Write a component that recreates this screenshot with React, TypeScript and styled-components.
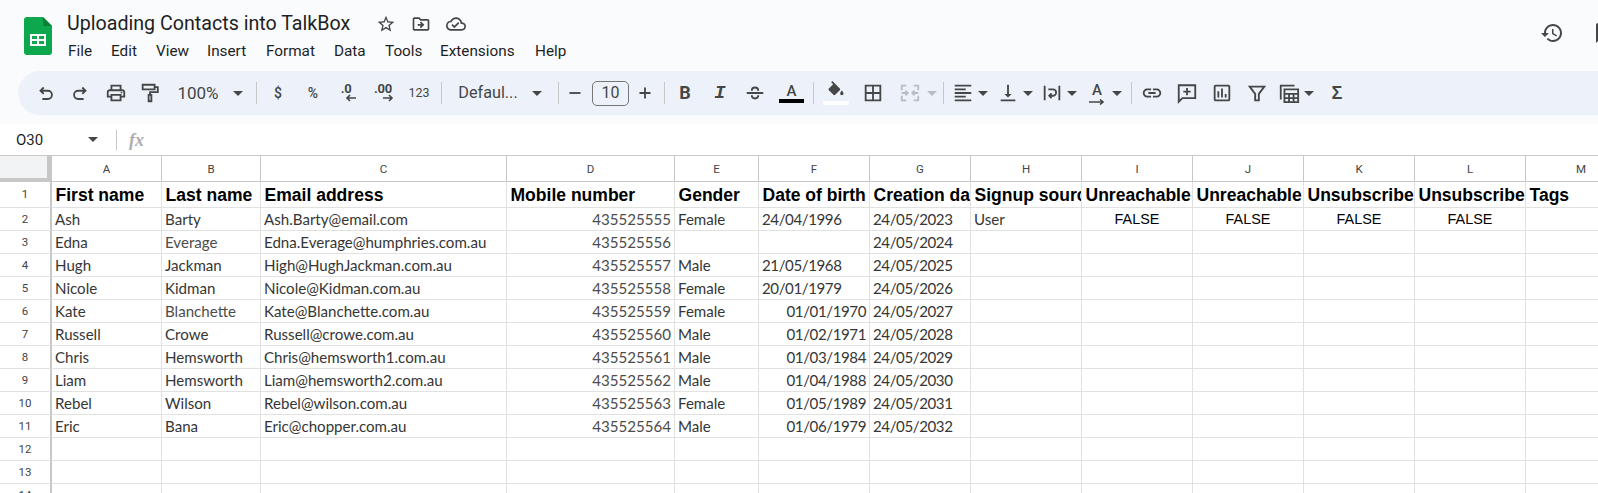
import React from "react";
import styled, { createGlobalStyle } from "styled-components";

const Global = createGlobalStyle`
  html, body { margin: 0; padding: 0; background: #fff; }
  body { width: 1598px; height: 493px; overflow: hidden; font-family: Roboto, "Liberation Sans", sans-serif; }
`;

const Page = styled.div`
  width: 1598px; height: 493px; overflow: hidden; display: flex; flex-direction: column;
`;
const Chrome = styled.div`
  height: 124px; background: #f9fbfd; display: flex; flex-direction: column; flex: none;
`;
const Header = styled.header`
  height: 71px; display: flex; align-items: flex-start; padding-left: 24px; flex: none;
`;
const LogoBox = styled.svg`
  width: 28px; height: 38px; margin-top: 17px; flex: none;
`;
const TitleBlock = styled.div`
  margin-left: 15px; display: flex; flex-direction: column; flex: none;
`;
const TitleRow = styled.div`
  display: flex; align-items: center; height: 24px; margin-top: 12px;
`;
const DocTitle = styled.h1`
  margin: 0; font: 400 19.65px/24px Roboto, sans-serif; color: #1f1f1f; width: 309px;
`;
const TitleIcon = styled.svg`
  width: 20px; height: 20px; fill: #444746; margin-right: 15px; flex: none;
`;
const MenuBar = styled.nav`
  display: flex; margin-top: 5px; height: 20px; align-items: center;
`;
const MenuItem = styled.span<{ $w: number }>`
  width: ${(p) => p.$w}px; font: 400 15.3px/20px Roboto, sans-serif; color: #1f1f1f; padding-left: 1px; box-sizing: border-box;
`;
const HeaderRight = styled.div`
  margin-left: auto; margin-right: -20px; margin-top: 21px; display: flex; gap: 30px;
`;
const HeaderIcon = styled.svg`
  width: 24px; height: 24px; fill: #444746; flex: none;
`;
const Toolbar = styled.div`
  height: 44px; margin-left: 18px; padding-left: 16px; background: #edf2fa; border-radius: 24px 0 0 24px;
  display: flex; align-items: center; flex: none; color: #444746;
`;
const Tool = styled.div<{ $w: number; $ml?: number }>`
  width: ${(p) => p.$w}px; margin-left: ${(p) => p.$ml ?? 0}px; height: 30px; flex: none;
  display: flex; flex-direction: column; align-items: center; justify-content: center; position: relative;
`;
const Glyph = styled.svg<{ $off?: boolean }>`
  width: 22px; height: 22px; flex: none; fill: ${(p) => (p.$off ? "#b9bcc1" : "#444746")};
`;
const StrokeGlyph = styled.svg<{ $off?: boolean }>`
  width: 22px; height: 22px; flex: none; fill: none; stroke: ${(p) => (p.$off ? "#b9bcc1" : "#444746")}; stroke-width: 2;
`;
const Caret = styled.span<{ $off?: boolean }>`
  width: 0; height: 0; border-left: 5px solid transparent; border-right: 5px solid transparent;
  border-top: 5px solid ${(p) => (p.$off ? "#b9bcc1" : "#444746")};
`;
const ToolDivider = styled.div<{ $ml: number }>`
  width: 1px; height: 22px; background: #c7c7c7; margin-left: ${(p) => p.$ml}px; flex: none;
`;
const ToolText = styled.span<{ $size?: number; $weight?: number }>`
  font: ${(p) => p.$weight ?? 400} ${(p) => p.$size ?? 14}px/18px Roboto, sans-serif; color: #444746; white-space: nowrap;
`;
const DecimalText = styled.span`
  font: 700 13px/12px Roboto, sans-serif; color: #444746; letter-spacing: -0.3px; margin-top: -2px;
`;
const DecimalArrow = styled.svg`
  width: 12px; height: 8px; fill: none; stroke: #444746; stroke-width: 1.6; margin: -1px 0 0 10px;
`;
const ItalicI = styled.span`
  font: italic 700 19px/18px "Liberation Mono", monospace; color: #444746;
`;
const BoldB = styled.span`
  font: 700 18px/18px Roboto, sans-serif; color: #444746;
`;
const ColorA = styled.span`
  font: 500 15px/15px Roboto, sans-serif; color: #444746; margin-top: 1px;
`;
const ColorBar = styled.span<{ $c: string }>`
  width: 100%; height: 4px; background: ${(p) => p.$c}; flex: none;
`;
const RotationArrow = styled.svg`
  width: 16px; height: 6px; fill: none; stroke: #444746; stroke-width: 1.6; flex: none; margin-top: 1px;
`;
const SmallGlyph = styled.svg`
  width: 20px; height: 20px; fill: #444746; flex: none;
`;
const SizeBox = styled.div`
  width: 37px; height: 25px; margin-left: 11px; border: 1px solid #747775; border-radius: 5px; box-sizing: border-box;
  display: flex; align-items: center; justify-content: center; flex: none;
  font: 400 16px/20px Roboto, sans-serif; color: #444746;
`;
const Sigma = styled.span`
  font: 700 18px/20px "Liberation Sans", sans-serif; color: #444746;
`;
const FormulaBar = styled.div`
  height: 31px; flex: none; display: flex; align-items: center; background: #fff; padding-left: 16px; box-sizing: border-box;
`;
const NameBox = styled.div`
  width: 88px; display: flex; align-items: center; justify-content: space-between; padding-right: 6px; box-sizing: border-box;
  font: 400 15px/18px Roboto, sans-serif; color: #1f1f1f;
`;
const FormulaDivider = styled.div`
  width: 1px; height: 20px; background: #c7c7c7; margin-left: 12px;
`;
const Fx = styled.span`
  font: italic 700 18px/18px "Liberation Serif", serif; color: #adadad; margin-left: 12px;
`;
const Sheet = styled.div`
  display: grid; grid-template-columns: 52px 110px 99px 246px 168px 84px 111px 101px 111px 111px 111px 111px 111px 111px;
  grid-auto-rows: 23px; grid-template-rows: 26px 26px; border-top: 1px solid #c7c7c7; flex: none; width: max-content;
`;
const Corner = styled.div`
  background: #f1f3f4; border-right: 5px solid #c7c7c7; border-bottom: 4px solid #c7c7c7; box-sizing: border-box;
`;
const ColHead = styled.div`
  display: flex; align-items: center; justify-content: center; box-sizing: border-box;
  border-right: 1px solid #c7c7c7; border-bottom: 1px solid #c7c7c7; background: #fff;
  font: 400 11.5px/14px Roboto, sans-serif; color: #444;
`;
const RowHead = styled.div`
  display: flex; align-items: center; justify-content: center; box-sizing: border-box;
  border-right: 2px solid #c7c7c7; border-bottom: 1px solid #e1e1e1; background: #fff;
  font: 400 11.5px/14px Roboto, sans-serif; color: #444; padding-bottom: 1px;
`;
const Cell = styled.div<{ $align?: string; $muted?: boolean }>`
  box-sizing: border-box; border-right: 1px solid #e1e1e1; border-bottom: 1px solid #e1e1e1;
  overflow: hidden; white-space: nowrap; padding: 0 3px; text-align: ${(p) => p.$align ?? "left"};
  font: 400 15.1px/23px Lato, sans-serif; color: ${(p) => (p.$muted ? "#4c4c4c" : "#363636")};
`;
const DateCell = styled(Cell)`
  letter-spacing: -0.42px;
`;
const HeadCell = styled(Cell)`
  font: 700 17.55px/26px "Liberation Sans", Arial, sans-serif; color: #000; padding-left: 3.5px;
`;
const BoolCell = styled(Cell)`
  font: 400 14.4px/23px "Liberation Sans", Arial, sans-serif; color: #000; text-align: center;
`;

const cols = ["A", "B", "C", "D", "E", "F", "G", "H", "I", "J", "K", "L", "M"];
const heads = ["First name", "Last name", "Email address", "Mobile number", "Gender", "Date of birth", "Creation date", "Signup source", "Unreachable", "Unreachable", "Unsubscribe", "Unsubscribe", "Tags"];

type Row = { f: string; l: string; lm?: boolean; e: string; m: string; g: string; d: string; dr?: boolean; c: string; s?: string; b?: boolean };
const rows: Row[] = [
  { f: "Ash", l: "Barty", e: "Ash.Barty@email.com", m: "435525555", g: "Female", d: "24/04/1996", c: "24/05/2023", s: "User", b: true },
  { f: "Edna", l: "Everage", lm: true, e: "Edna.Everage@humphries.com.au", m: "435525556", g: "", d: "", c: "24/05/2024" },
  { f: "Hugh", l: "Jackman", e: "High@HughJackman.com.au", m: "435525557", g: "Male", d: "21/05/1968", c: "24/05/2025" },
  { f: "Nicole", l: "Kidman", e: "Nicole@Kidman.com.au", m: "435525558", g: "Female", d: "20/01/1979", c: "24/05/2026" },
  { f: "Kate", l: "Blanchette", lm: true, e: "Kate@Blanchette.com.au", m: "435525559", g: "Female", d: "01/01/1970", dr: true, c: "24/05/2027" },
  { f: "Russell", l: "Crowe", e: "Russell@crowe.com.au", m: "435525560", g: "Male", d: "01/02/1971", dr: true, c: "24/05/2028" },
  { f: "Chris", l: "Hemsworth", e: "Chris@hemsworth1.com.au", m: "435525561", g: "Male", d: "01/03/1984", dr: true, c: "24/05/2029" },
  { f: "Liam", l: "Hemsworth", e: "Liam@hemsworth2.com.au", m: "435525562", g: "Male", d: "01/04/1988", dr: true, c: "24/05/2030" },
  { f: "Rebel", l: "Wilson", e: "Rebel@wilson.com.au", m: "435525563", g: "Female", d: "01/05/1989", dr: true, c: "24/05/2031" },
  { f: "Eric", l: "Bana", e: "Eric@chopper.com.au", m: "435525564", g: "Male", d: "01/06/1979", dr: true, c: "24/05/2032" },
];

const menus: [string, number][] = [["File", 43], ["Edit", 45], ["View", 51], ["Insert", 59], ["Format", 68], ["Data", 51], ["Tools", 55], ["Extensions", 95], ["Help", 40]];

export default function App() {
  return (
    <Page>
      <Global />
      <Chrome>
        <Header>
          <LogoBox viewBox="0 0 28 38">
            <path d="M3 0h16l9 9v26a3 3 0 0 1-3 3H3a3 3 0 0 1-3-3V3a3 3 0 0 1 3-3z" fill="#0da84e" />
            <path d="M19 0l9 9h-7a2 2 0 0 1-2-2z" fill="#0a7f3b" />
            <path d="M6 17h16v12H6z M8 19v3h5v-3z M15 19v3h5v-3z M8 24v3h5v-3z M15 24v3h5v-3z" fill="#fff" fillRule="evenodd" />
          </LogoBox>
          <TitleBlock>
            <TitleRow>
              <DocTitle>Uploading Contacts into TalkBox</DocTitle>
              <TitleIcon viewBox="0 0 24 24"><path d="M22 9.24l-7.19-.62L12 2 9.19 8.63 2 9.24l5.46 4.73L5.82 21 12 17.27 18.18 21l-1.63-7.03L22 9.24zM12 15.4l-3.76 2.27 1-4.28-3.32-2.88 4.38-.38L12 6.1l1.71 4.04 4.38.38-3.32 2.88 1 4.28L12 15.4z" /></TitleIcon>
              <TitleIcon viewBox="0 0 24 24"><path d="M20 6h-8l-2-2H4c-1.1 0-1.99.9-1.99 2L2 18c0 1.1.9 2 2 2h16c1.1 0 2-.9 2-2V8c0-1.1-.9-2-2-2zm0 12H4V6h5.17l2 2H20v10zm-8.01-9l-1.41 1.41L12.16 12H8v2h4.16l-1.59 1.59L11.99 17 16 13.01 11.99 9z" /></TitleIcon>
              <TitleIcon viewBox="0 0 24 24"><path d="M19.35 10.04C18.67 6.59 15.64 4 12 4 9.11 4 6.6 5.64 5.35 8.04 2.34 8.36 0 10.91 0 14c0 3.31 2.69 6 6 6h13c2.76 0 5-2.24 5-5 0-2.64-2.05-4.78-4.65-4.96zM19 18H6c-2.21 0-4-1.79-4-4 0-2.05 1.53-3.76 3.56-3.97l1.07-.11.5-.95C8.08 7.14 9.94 6 12 6c2.62 0 4.88 1.86 5.39 4.43l.3 1.5 1.53.11c1.56.1 2.78 1.41 2.78 2.96 0 1.65-1.35 3-3 3zm-9-3.82l-2.09-2.09L6.5 13.5 10 17l6.01-6.01-1.41-1.41z" /></TitleIcon>
            </TitleRow>
            <MenuBar>
              {menus.map(([m, w]) => <MenuItem key={m} $w={w}>{m}</MenuItem>)}
            </MenuBar>
          </TitleBlock>
          <HeaderRight>
            <HeaderIcon viewBox="0 0 24 24"><path d="M13 3c-4.97 0-9 4.03-9 9H1l3.89 3.89.07.14L9 12H6c0-3.87 3.13-7 7-7s7 3.13 7 7-3.13 7-7 7c-1.93 0-3.68-.79-4.94-2.06l-1.42 1.42C8.27 19.99 10.51 21 13 21c4.97 0 9-4.03 9-9s-4.03-9-9-9zm-1 5v5l4.28 2.54.72-1.21-3.5-2.08V8H12z" /></HeaderIcon>
            <HeaderIcon viewBox="0 0 24 24"><path d="M20 2H4c-1.1 0-2 .9-2 2v18l4-4h14c1.1 0 2-.9 2-2V4c0-1.1-.9-2-2-2zm0 14H5.2L4 17.2V4h16v12z" /></HeaderIcon>
          </HeaderRight>
        </Header>
        <Toolbar>
          <Tool $w={24}><StrokeGlyph viewBox="0 0 24 24"><path d="M9.5 6L6 9.5l3.5 3.5M6 9.5h8a4.5 4.5 0 0 1 0 9H8" /></StrokeGlyph></Tool>
          <Tool $w={24} $ml={10}><StrokeGlyph viewBox="0 0 24 24"><path d="M14.5 6L18 9.5 14.5 13M18 9.5h-8a4.5 4.5 0 0 0 0 9h6" /></StrokeGlyph></Tool>
          <Tool $w={24} $ml={12}><Glyph viewBox="0 0 24 24"><path d="M19 8h-1V3H6v5H5c-1.66 0-3 1.34-3 3v6h4v4h12v-4h4v-6c0-1.66-1.34-3-3-3zM8 5h8v3H8V5zm8 12v2H8v-4h8v2zm2-2v-2H6v2H4v-4c0-.55.45-1 1-1h14c.55 0 1 .45 1 1v4h-2z" /><circle cx="18" cy="11.5" r="1" /></Glyph></Tool>
          <Tool $w={24} $ml={10}><StrokeGlyph viewBox="0 0 24 24"><path d="M4 3h13v5H4zM17 5.5h3.5V11H12v3M10.5 14h3v7h-3z" /></StrokeGlyph></Tool>
          <Tool $w={44} $ml={14}><ToolText $size={17}>100%</ToolText></Tool>
          <Tool $w={10} $ml={13}><Caret /></Tool>
          <ToolDivider $ml={13} />
          <Tool $w={20} $ml={11}><ToolText $size={14} $weight={500}>$</ToolText></Tool>
          <Tool $w={20} $ml={15}><ToolText $size={14} $weight={500}>%</ToolText></Tool>
          <Tool $w={24} $ml={11}>
            <DecimalText>.0</DecimalText>
            <DecimalArrow viewBox="0 0 12 8"><path d="M11 4H2M5 1L2 4l3 3" /></DecimalArrow>
          </Tool>
          <Tool $w={28} $ml={11}>
            <DecimalText>.00</DecimalText>
            <DecimalArrow viewBox="0 0 12 8"><path d="M1 4h9M7 1l3 3-3 3" /></DecimalArrow>
          </Tool>
          <Tool $w={24} $ml={10}><ToolText $size={12.5}>123</ToolText></Tool>
          <ToolDivider $ml={10} />
          <Tool $w={58} $ml={17}><ToolText $size={16.2}>Defaul...</ToolText></Tool>
          <Tool $w={10} $ml={15}><Caret /></Tool>
          <ToolDivider $ml={16} />
          <Tool $w={12} $ml={10}><StrokeGlyph viewBox="0 0 24 24"><path d="M6 12h12" /></StrokeGlyph></Tool>
          <SizeBox>10</SizeBox>
          <Tool $w={14} $ml={9}><StrokeGlyph viewBox="0 0 24 24"><path d="M6 12h12M12 6v12" /></StrokeGlyph></Tool>
          <ToolDivider $ml={12} />
          <Tool $w={16} $ml={12}><BoldB>B</BoldB></Tool>
          <Tool $w={16} $ml={19}><ItalicI>I</ItalicI></Tool>
          <Tool $w={20} $ml={17}><StrokeGlyph viewBox="0 0 24 24"><path d="M3 12h18M8.5 9.5C8.5 7.5 10 6 12 6s3.5 1.5 3.5 3.5M8.5 14.5C8.5 16.5 10 18 12 18s3.5-1.5 3.5-3.5" /></StrokeGlyph></Tool>
          <Tool $w={25} $ml={14}><ColorA>A</ColorA><ColorBar $c="#000" /></Tool>
          <ToolDivider $ml={9} />
          <Tool $w={26} $ml={9}>
            <SmallGlyph viewBox="0 0 24 24"><path d="M16.56 8.94L7.62 0 6.21 1.41l2.38 2.38-5.15 5.15c-.59.59-.59 1.54 0 2.12l5.5 5.5c.29.29.68.44 1.06.44s.77-.15 1.06-.44l5.5-5.5c.59-.58.59-1.53 0-2.12zM19 11.5s-2 2.17-2 3.5c0 1.1.9 2 2 2s2-.9 2-2c0-1.33-2-3.5-2-3.5z" /></SmallGlyph>
            <ColorBar $c="#fff" />
          </Tool>
          <Tool $w={22} $ml={13}><Glyph viewBox="0 0 24 24"><path d="M3 3v18h18V3H3zm8 16H5v-6h6v6zm0-8H5V5h6v6zm8 8h-6v-6h6v6zm0-8h-6V5h6v6z" /></Glyph></Tool>
          <Tool $w={22} $ml={15}><StrokeGlyph $off viewBox="0 0 24 24"><path d="M8 4H3v5M8 20H3v-5M16 4h5v5M16 20h5v-5M3 12h6M7 9.5L9.5 12 7 14.5M21 12h-6M17 9.5L14.5 12l2.5 2.5" /></StrokeGlyph></Tool>
          <Tool $w={10} $ml={6}><Caret $off /></Tool>
          <ToolDivider $ml={6} />
          <Tool $w={22} $ml={8}><Glyph viewBox="0 0 24 24"><path d="M15 15H3v2h12v-2zm0-8H3v2h12V7zM3 13h18v-2H3v2zm0 8h18v-2H3v2zM3 3v2h18V3H3z" /></Glyph></Tool>
          <Tool $w={10} $ml={4}><Caret /></Tool>
          <Tool $w={22} $ml={9}><Glyph viewBox="0 0 24 24"><path d="M16 13h-3V3h-2v10H8l4 4 4-4zM4 19v2h16v-2H4z" /></Glyph></Tool>
          <Tool $w={10} $ml={4}><Caret /></Tool>
          <Tool $w={22} $ml={8}><StrokeGlyph viewBox="0 0 24 24"><path d="M4 4v16M20 4v16M8 8h5a3.5 3.5 0 0 1 0 7H9M11.5 12.5L9 15l2.5 2.5" /></StrokeGlyph></Tool>
          <Tool $w={10} $ml={4}><Caret /></Tool>
          <Tool $w={22} $ml={9}>
            <ColorA>A</ColorA>
            <RotationArrow viewBox="0 0 16 6"><path d="M0 3h14M11 .5L14 3l-3 2.5" /></RotationArrow>
          </Tool>
          <Tool $w={10} $ml={4}><Caret /></Tool>
          <ToolDivider $ml={9} />
          <Tool $w={22} $ml={9}><Glyph viewBox="0 0 24 24"><path d="M3.9 12c0-1.71 1.39-3.1 3.1-3.1h4V7H7c-2.76 0-5 2.24-5 5s2.24 5 5 5h4v-1.9H7c-1.71 0-3.1-1.39-3.1-3.1zM8 13h8v-2H8v2zm9-6h-4v1.9h4c1.71 0 3.1 1.39 3.1 3.1s-1.39 3.1-3.1 3.1h-4V17h4c2.76 0 5-2.24 5-5s-2.24-5-5-5z" /></Glyph></Tool>
          <Tool $w={22} $ml={13}><StrokeGlyph viewBox="0 0 24 24"><path d="M3 3.5h18v14H7l-4 4zM12 6.5v8M8 10.5h8" /></StrokeGlyph></Tool>
          <Tool $w={22} $ml={13}><Glyph viewBox="0 0 24 24"><path d="M9 17H7v-7h2v7zm4 0h-2V7h2v10zm4 0h-2v-4h2v4zm2 2H5V5h14v14zm0-16H5c-1.1 0-2 .9-2 2v14c0 1.1.9 2 2 2h14c1.1 0 2-.9 2-2V5c0-1.1-.9-2-2-2z" /></Glyph></Tool>
          <Tool $w={22} $ml={13}><StrokeGlyph viewBox="0 0 24 24"><path d="M4 5h16l-6 8v7h-4v-7z" /></StrokeGlyph></Tool>
          <Tool $w={22} $ml={10}><StrokeGlyph viewBox="0 0 24 24"><path d="M3 19V4h15M7 8h15v14H7zM7 13h15M7 17.5h15M12 13v9M17 13v9" /></StrokeGlyph></Tool>
          <Tool $w={10} $ml={4}><Caret /></Tool>
          <Tool $w={16} $ml={15}><Sigma>Σ</Sigma></Tool>
        </Toolbar>
      </Chrome>
      <FormulaBar>
        <NameBox>O30<Caret /></NameBox>
        <FormulaDivider />
        <Fx>fx</Fx>
      </FormulaBar>
      <Sheet>
        <Corner />
        {cols.map((c) => <ColHead key={c}>{c}</ColHead>)}
        <RowHead>1</RowHead>
        {heads.map((h, i) => <HeadCell key={i}>{h}</HeadCell>)}
        {rows.map((r, i) => (
          <React.Fragment key={r.m}>
            <RowHead>{i + 2}</RowHead>
            <Cell>{r.f}</Cell>
            <Cell $muted={r.lm}>{r.l}</Cell>
            <Cell>{r.e}</Cell>
            <Cell $align="right" $muted>{r.m}</Cell>
            <Cell>{r.g}</Cell>
            <DateCell $align={r.dr ? "right" : "left"}>{r.d}</DateCell>
            <DateCell>{r.c}</DateCell>
            <Cell>{r.s}</Cell>
            {[0, 1, 2, 3].map((k) => (r.b ? <BoolCell key={k}>FALSE</BoolCell> : <Cell key={k} />))}
            <Cell />
          </React.Fragment>
        ))}
        {[12, 13, 14].map((n) => (
          <React.Fragment key={n}>
            <RowHead>{n}</RowHead>
            {cols.map((c) => <Cell key={c} />)}
          </React.Fragment>
        ))}
      </Sheet>
    </Page>
  );
}
